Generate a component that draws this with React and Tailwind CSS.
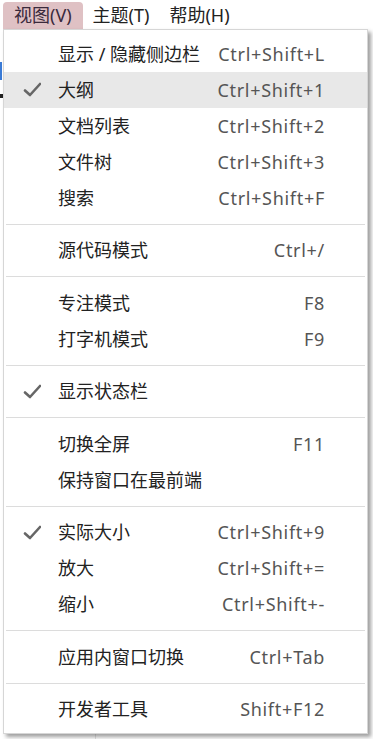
import React from "react";

const font = "font-['Noto_Sans','Noto_Sans_CJK_SC',sans-serif]";

const groups = [
  [
    { label: "显示 / 隐藏侧边栏", key: "Ctrl+Shift+L" },
    { label: "大纲", key: "Ctrl+Shift+1", checked: true, active: true },
    { label: "文档列表", key: "Ctrl+Shift+2" },
    { label: "文件树", key: "Ctrl+Shift+3" },
    { label: "搜索", key: "Ctrl+Shift+F" },
  ],
  [{ label: "源代码模式", key: "Ctrl+/" }],
  [
    { label: "专注模式", key: "F8" },
    { label: "打字机模式", key: "F9" },
  ],
  [{ label: "显示状态栏", checked: true }],
  [
    { label: "切换全屏", key: "F11" },
    { label: "保持窗口在最前端" },
  ],
  [
    { label: "实际大小", key: "Ctrl+Shift+9", checked: true },
    { label: "放大", key: "Ctrl+Shift+=" },
    { label: "缩小", key: "Ctrl+Shift+-" },
  ],
  [{ label: "应用内窗口切换", key: "Ctrl+Tab" }],
  [{ label: "开发者工具", key: "Shift+F12" }],
];

const Check = () => (
  <svg width="18" height="16" viewBox="0 0 18 16" fill="none">
    <path d="M2 8.5 L7 13 L17 2" stroke="#666" strokeWidth="2.6" strokeLinecap="round" strokeLinejoin="round" />
  </svg>
);

const Item = ({ item }) => (
  <div className={`flex h-9 items-center ${item.active ? "bg-[#e8e8e8]" : ""}`}>
    <div className="flex w-[54px] justify-center pl-[1px]">{item.checked && <Check />}</div>
    <span className="flex-1 text-[18px] text-[#222]">{item.label}</span>
    {item.key && <span className="pr-[42px] text-[18px] tracking-[0.7px] text-[#555]">{item.key}</span>}
  </div>
);

export default function App() {
  return (
    <div className={`relative h-[739px] w-[373px] overflow-hidden bg-white ${font}`}>
      {/* menubar */}
      <div className="flex h-[29px] items-end pl-[3px] text-[18px] text-[#222]">
        <div className="flex h-[27px] items-center rounded-t-[4px] bg-[#dfc1c4] px-[11px] text-[#3a2a3c]">视图(V)</div>
        <div className="flex h-[27px] items-center px-[10px]">主题(T)</div>
        <div className="flex h-[27px] items-center px-[10px]">帮助(H)</div>
      </div>

      {/* app behind the menu */}
      <div className="flex h-[710px]">
        <div className="relative w-[96px] border-r border-[#e4e4e4]">
          <div className="absolute left-0 top-[33px] h-[18px] w-[2px] bg-[#3b7bd6]" />
          <div className="absolute left-0 top-[65px] h-[4px] w-[3px] bg-[#222]" />
        </div>
        <div className="flex-1" />
      </div>

      {/* dropdown */}
      <div className="absolute left-[3px] top-[29px] w-[365px] border border-[#d6d6d6] bg-white pb-[5px] pt-[6px] shadow-[3px_3px_4px_rgba(0,0,0,0.38)]">
        {groups.map((g, i) => (
          <div key={i}>
            {i > 0 && <div className="mx-[2px] my-[7.75px] h-px bg-[#dcdcdc]" />}
            {g.map((item) => (
              <Item key={item.label} item={item} />
            ))}
          </div>
        ))}
      </div>
    </div>
  );
}
